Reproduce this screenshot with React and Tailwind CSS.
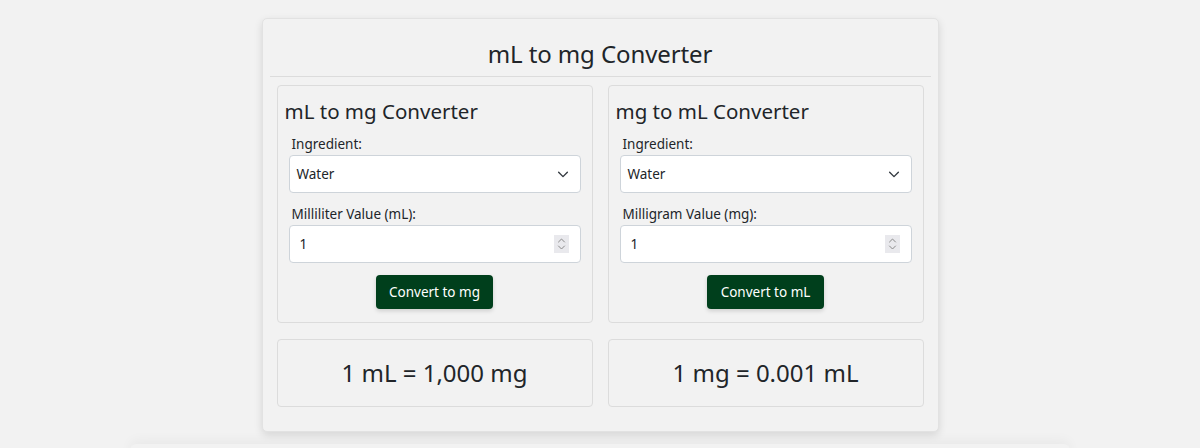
import React from "react";

function Chevron() {
  return (
    <svg width="14" height="14" viewBox="0 0 16 16" fill="none" stroke="#343a40" strokeWidth="1.6" strokeLinecap="round" strokeLinejoin="round">
      <path d="M3 6l5 5 5-5" />
    </svg>
  );
}

function Spinner() {
  return (
    <div className="flex h-[18px] w-[15px] flex-col items-center justify-center bg-[#e9e9ed]">
      <svg width="9" height="14" viewBox="0 0 9 14" fill="none" stroke="#8a8a8a" strokeWidth="1" strokeLinecap="round" strokeLinejoin="round">
        <path d="M1.5 5l3-3 3 3" />
        <path d="M1.5 9l3 3 3-3" />
      </svg>
    </div>
  );
}

function Panel({ title, label, button }) {
  return (
    <div className="rounded-[4px] border border-[#dcdcdc] px-[7px] pt-[10px] pb-[13px]">
      <h3 className="text-[20.5px] leading-[30px] text-[#212529]">{title}</h3>
      <div className="px-[4px]">
        <label className="mt-[8px] block pl-[3px] text-[13.5px] leading-[20px] text-[#212529]">Ingredient:</label>
        <div className="mt-[1px] flex h-[38px] items-center justify-between rounded-[4px] border border-[#ced4da] bg-white pl-[7px] pr-[10px]">
          <span className="text-[13.5px] text-[#212529]">Water</span>
          <Chevron />
        </div>
        <label className="mt-[11px] block pl-[3px] text-[13.5px] leading-[20px] text-[#212529]">{label}</label>
        <div className="mt-[1px] flex h-[38px] items-center justify-between rounded-[4px] border border-[#ced4da] bg-white pl-[10px] pr-[11px]">
          <span className="text-[13.5px] text-[#212529]">1</span>
          <Spinner />
        </div>
        <div className="mt-[12px] flex justify-center">
          <button className="h-[34px] rounded-[4px] bg-[#003f1c] px-[13.5px] text-[13.5px] text-white shadow-[0_2px_4px_rgba(0,0,0,0.15)]">
            {button}
          </button>
        </div>
      </div>
    </div>
  );
}

function Result({ text }) {
  return (
    <div className="flex h-[68px] items-center justify-center rounded-[4px] border border-[#dcdcdc]">
      <span className="text-[24px] text-[#212529]">{text}</span>
    </div>
  );
}

export default function App() {
  return (
    <div
      className="min-h-[448px] bg-[#f2f2f2] pt-[18px]"
      style={{ fontFamily: '"Segoe UI", "Noto Sans", "Open Sans", sans-serif' }}
    >
      <div className="mx-auto w-[677px] rounded-[5px] border border-[#e2e2e2] bg-[#f2f2f2] px-[7px] pb-[24px] shadow-[0_3px_8px_rgba(0,0,0,0.12)]">
        <h2 className="pt-[18px] pb-[5px] text-center text-[24px] leading-[34px] tracking-[-0.1px] text-[#212529]">mL to mg Converter</h2>
        <div className="border-t border-[#dcdcdc]" />
        <div className="mt-[8px] grid grid-cols-2 gap-x-[15px] gap-y-[16px] px-[7px]">
          <Panel title="mL to mg Converter" label="Milliliter Value (mL):" button="Convert to mg" />
          <Panel title="mg to mL Converter" label="Milligram Value (mg):" button="Convert to mL" />
          <Result text="1 mL = 1,000 mg" />
          <Result text="1 mg = 0.001 mL" />
        </div>
      </div>
      <div className="mx-auto mt-[12px] h-[20px] w-[940px] rounded-[6px] bg-[#f2f2f2] shadow-[0_-4px_12px_rgba(0,0,0,0.04)]" />
    </div>
  );
}
